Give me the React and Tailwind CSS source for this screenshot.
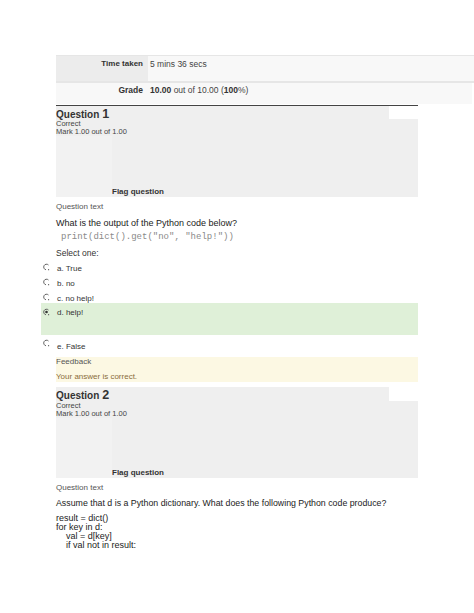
import React from 'react';

// Small open-ring radio glyph as it shows in the scanned quiz review
function Radio({ checked }) {
    return (
        <svg width="7" height="8" viewBox="0 0 7 8" className="shrink-0">
            <path d="M5.48 2.02 A2.8 2.8 0 1 0 3.01 6.76" fill="none" stroke="#555" strokeWidth="0.9" />
            <circle cx="5.6" cy="6.7" r="0.6" fill="#555" />
            {checked && <circle cx="3.5" cy="4" r="1.3" fill="#333" />}
        </svg>
    );
}

function QuestionInfo({ number, bandHeight = 'h-[13px]' }) {
    return (
        <div className="w-[362px] h-[91px] flex flex-col bg-[#efefef]">
            <div className={`flex ${bandHeight} bg-white`}>
                <div className="flex-1 bg-[#efefef] leading-[13px] text-[#333] font-bold">
                    <span className="text-[10px]">Question </span>
                    <span className="text-[12.5px]">{number}</span>
                </div>
                <div className="w-[29px]"></div>
            </div>
            <div className="text-[7.5px] leading-[8px] text-[#444] pt-px">Correct</div>
            <div className="text-[7.5px] leading-[8px] text-[#444]">Mark 1.00 out of 1.00</div>
            <div className="flex-1 flex">
                <div className="w-[56px] bg-[#f2f2f2]"></div>
                <div className="flex-1 flex items-end">
                    <span className="text-[8px] leading-[10px] font-bold text-[#333]">Flag question</span>
                </div>
            </div>
        </div>
    );
}

const options = [
    { label: 'a. True', h: 'h-[15px]' },
    { label: 'b. no', h: 'h-[15px]' },
    { label: 'c. no help!', h: 'h-[12px]' },
];

export default function App() {
    return (
        <div className="w-[474px] h-[613px] overflow-hidden bg-white text-[#333] font-['Liberation_Sans',Arial,sans-serif] pt-[55px]">
            {/* attempt summary table */}
            <div className="ml-[56px] w-[418px] text-[8.5px]">
                <div className="flex h-[26px] border-t border-[#e6e6e6]">
                    <div className="w-[92px] bg-[#ececec] text-right pr-[5px] pt-[3px] leading-[10px] font-bold text-[8px]">Time taken</div>
                    <div className="flex-1 bg-[#f8f8f8] pl-[2px] pt-[3px] leading-[10px] text-[#444]">5 mins 36 secs</div>
                </div>
                <div className="h-[2px] bg-[#e6e6e6]"></div>
                <div className="flex h-[21px] bg-[#f8f8f8] w-[416px]">
                    <div className="w-[92px] text-right pr-[5px] pt-[2px] leading-[10px] font-bold">Grade</div>
                    <div className="flex-1 pl-[2px] pt-[2px] leading-[10px] text-[#444]">
                        <b className="text-[#333]">10.00</b> out of 10.00 (<b className="text-[#333]">100</b>%)
                    </div>
                </div>
            </div>

            <div className="ml-[56px] mt-px w-[362px] h-px bg-[#444]"></div>

            <div className="pl-[56px]">
                <QuestionInfo number="1" />

                <div className="mt-[5px] text-[8px] leading-[10px] text-[#555]">Question text</div>
                <div className="mt-[5px] text-[9px] leading-[12px] text-[#222]">What is the output of the Python code below?</div>
                <div className="mt-[2px] pl-[5px] text-[9px] leading-[12px] text-[#8a8a8a] font-['Liberation_Mono','Courier_New',monospace]">
                    print(dict().get("no", "help!"))
                </div>
                <div className="mt-[5px] text-[8.5px] leading-[10px] text-[#333]">Select one:</div>

                {/* answer options */}
                <div className="-ml-[15px] mt-[3px] text-[8px] text-[#333]">
                    {options.map((o) => (
                        <div key={o.label} className={`flex ${o.h} pl-[2px] gap-[7px]`}>
                            <div className="pt-[2px]"><Radio /></div>
                            <span className="leading-[15px]">{o.label}</span>
                        </div>
                    ))}
                    <div className="flex w-[377px] h-[32px] bg-[#dff0d8] pl-[2px] gap-[7px] pt-[4px]">
                        <div className="pt-[1px]"><Radio checked /></div>
                        <span className="leading-[11px]">d. help!</span>
                    </div>
                    <div className="flex h-[15px] mt-[4px] pl-[2px] gap-[7px]">
                        <div><Radio /></div>
                        <span className="leading-[15px]">e. False</span>
                    </div>
                </div>

                {/* feedback */}
                <div className="mt-[3px] w-[362px] h-[25px] bg-[#fcf8e3] text-[8px]">
                    <div className="leading-[10px] text-[#555]">Feedback</div>
                    <div className="mt-[5px] leading-[10px] text-[#8a6d3b]">Your answer is correct.</div>
                </div>

                <div className="mt-[5px]">
                    <QuestionInfo number="2" bandHeight="h-[14px]" />
                </div>

                <div className="mt-[5px] text-[8px] leading-[10px] text-[#555]">Question text</div>
                <div className="mt-[4px] text-[8.8px] leading-[12px] text-[#222]">
                    Assume that d is a Python dictionary. What does the following Python code produce?
                </div>
                <div className="mt-[5px] text-[9px] leading-[9px] text-[#222]">
                    <div>result = dict()</div>
                    <div>for key in d:</div>
                    <div className="pl-[10px]">val = d[key]</div>
                    <div className="pl-[10px]">if val not in result:</div>
                </div>
            </div>
        </div>
    );
}
